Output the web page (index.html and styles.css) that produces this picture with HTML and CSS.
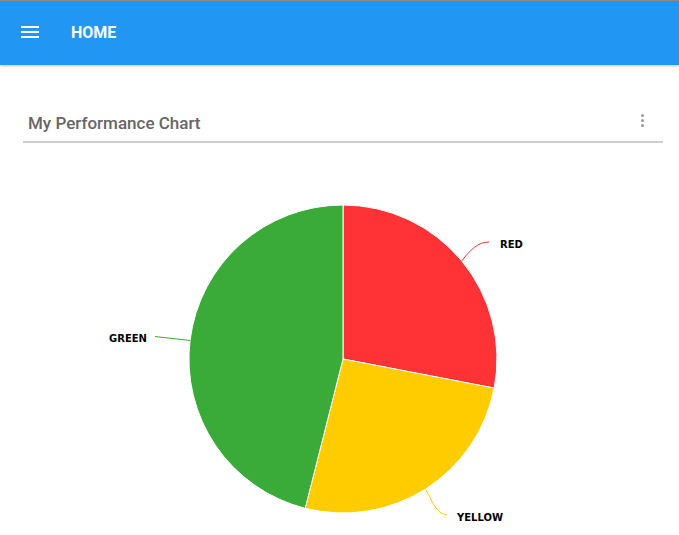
FILE: index.html
```html
<!DOCTYPE html>
<html>
<head>
<meta charset="utf-8">
<link rel="stylesheet" href="styles.css">
</head>
<body>
<header class="appbar">
  <svg class="menu-icon" width="18" height="12" viewBox="0 0 18 12">
    <rect x="0" y="0" width="18" height="2" fill="#fff"/>
    <rect x="0" y="5" width="18" height="2" fill="#fff"/>
    <rect x="0" y="10" width="18" height="2" fill="#fff"/>
  </svg>
  <span class="appbar-title">HOME</span>
</header>
<main class="card">
  <div class="card-head">
    <h2 class="card-title">My Performance Chart</h2>
    <div class="kebab"><span></span><span></span><span></span></div>
  </div>
  <svg class="chart" width="640" height="392" viewBox="23 143 640 392">
    <path d="M343,359 L343,205 A154,154 0 0 1 494.2,388.1 Z" fill="#ff3336" stroke="#fff" stroke-width="1"/>
    <path d="M343,359 L494.2,388.1 A154,154 0 0 1 305.2,508.3 Z" fill="#ffcc00" stroke="#fff" stroke-width="1"/>
    <path d="M343,359 L305.2,508.3 A154,154 0 0 1 343,205 Z" fill="#3aaa38" stroke="#fff" stroke-width="1"/>
    <path d="M461.8,260.9 C470,250 478,242 489,242" fill="none" stroke="#ff3336" stroke-width="1"/>
    <path d="M425.6,489.5 C432,500 436,514 447,515" fill="none" stroke="#ffcc00" stroke-width="1"/>
    <path d="M190.2,340.5 L155,336.5" fill="none" stroke="#3aaa38" stroke-width="1"/>
    <text class="label" x="500" y="247.5">RED</text>
    <text class="label" x="457" y="520.5">YELLOW</text>
    <text class="label" x="109" y="341.5">GREEN</text>
  </svg>
</main>
</body>
</html>
```
FILE: styles.css
```css
html, body {
  margin: 0;
  padding: 0;
  background: #fff;
  overflow: hidden;
  font-family: Roboto, "Liberation Sans", sans-serif;
}
body {
  border-top: 1px solid #8a8a8a;
}
.appbar {
  height: 64px;
  background: #2196f3;
  display: flex;
  align-items: center;
  padding-left: 21px;
  gap: 32px;
  box-shadow: 0 1px 3px rgba(0,0,0,0.25);
  position: relative;
}
.menu-icon {
  display: block;
  margin-top: -2px;
}
.appbar-title {
  color: #fff;
  font-weight: 700;
  font-size: 16px;
  margin-top: -1px;
}
.card {
  display: block;
  width: 640px;
  margin: 46px 0 0 23px;
}
.card-head {
  display: flex;
  justify-content: space-between;
  align-items: flex-start;
  padding: 0 19px 6px 5px;
  border-bottom: 2px solid #cfcfcf;
}
.card-title {
  margin: 0;
  font-size: 17px;
  line-height: 24px;
  font-weight: 500;
  color: #666;
}
.kebab {
  display: flex;
  flex-direction: column;
  gap: 2px;
  margin-top: 3px;
}
.kebab span {
  width: 3px;
  height: 3px;
  border-radius: 50%;
  background: #9a9a9a;
}
.chart {
  display: block;
}
.label {
  font-family: "DejaVu Sans", sans-serif;
  font-weight: 700;
  font-size: 10px;
  fill: #000;
}
```
